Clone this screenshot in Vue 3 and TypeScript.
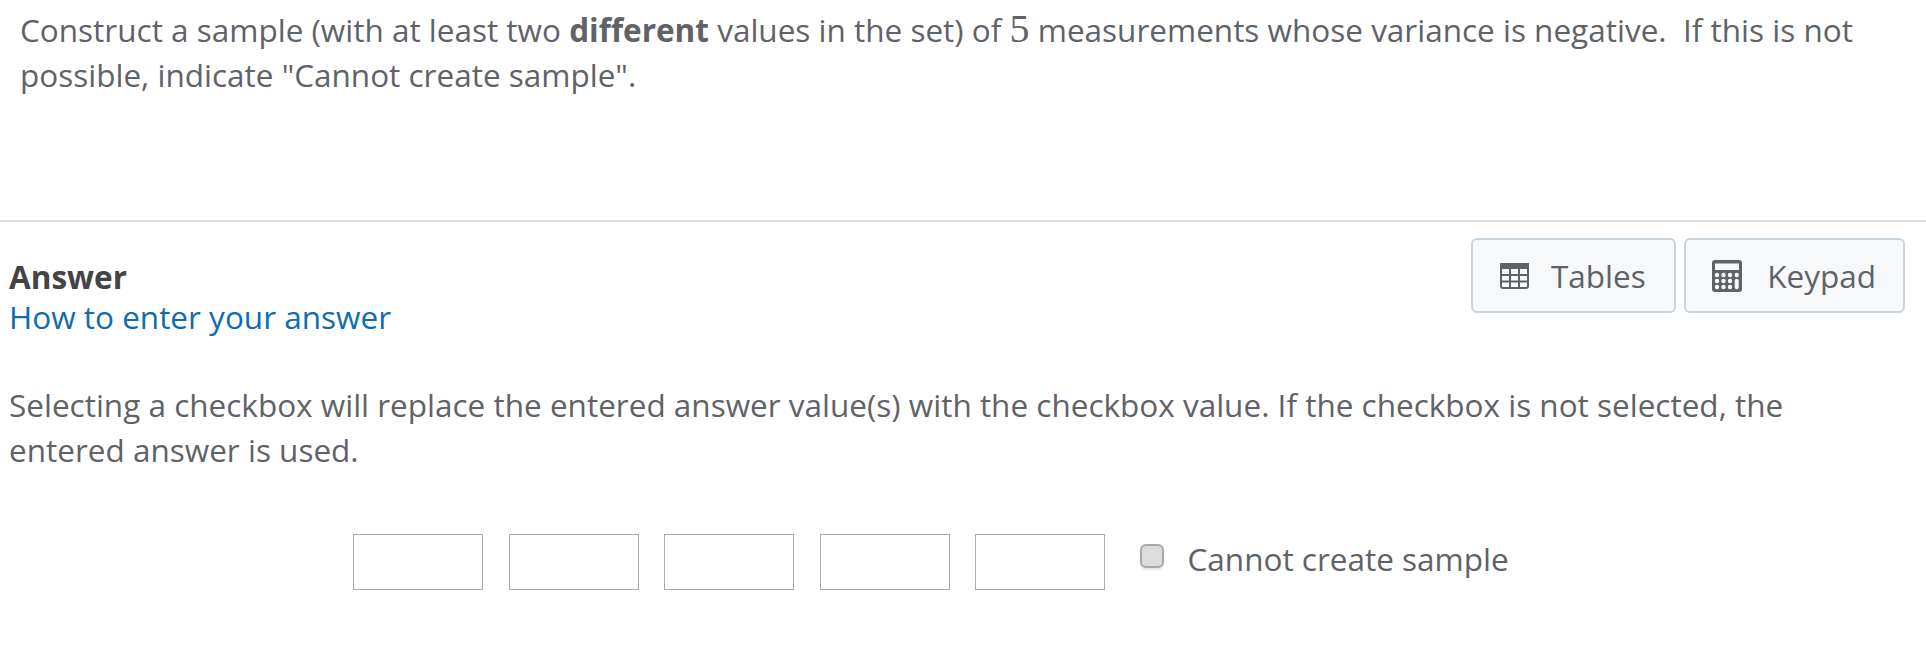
<script setup lang="ts">
const boxes: number[] = [1, 2, 3, 4, 5]
const dots: [number, number][] = [
  [5, 15], [11.5, 15], [18, 15], [24.7, 15],
  [5, 21], [11.5, 21], [18, 21],
  [5, 27], [11.5, 27], [18, 27],
]
</script>

<template>
  <main class="page">
    <p class="question">
      Construct a sample (with at least two <strong>different</strong> values in the set) of <span class="math">5</span> measurements whose variance is negative.&nbsp; If this is not possible, indicate "Cannot create sample".
    </p>
    <hr class="rule" />
    <section class="answer">
      <div class="head">
        <div>
          <div class="title">Answer</div>
          <a class="link">How to enter your answer</a>
        </div>
        <div class="tools">
          <button class="tool tool-tables">
            <svg viewBox="0 0 29 26" class="ic-table" fill="none" stroke="#5f6368" stroke-width="2">
              <rect x="1" y="1" width="27" height="24" rx="2" />
              <rect x="1" y="1" width="27" height="4" fill="#5f6368" />
              <path d="M1 12h27M1 18.5h27M10 5v20M19 5v20" />
            </svg>
            Tables
          </button>
          <button class="tool tool-keypad">
            <svg viewBox="0 0 30 32" class="ic-keypad">
              <rect width="30" height="32" rx="3" fill="#5f6368" />
              <rect x="3" y="3.5" width="24" height="6.5" fill="#f7f8fa" />
              <circle v-for="[x, y] in dots" :key="`${x}-${y}`" :cx="x" :cy="y" r="2.2" fill="#f7f8fa" />
              <rect x="22.7" y="18.8" width="4" height="10.4" rx="2" fill="#f7f8fa" />
            </svg>
            Keypad
          </button>
        </div>
      </div>
      <p class="note">Selecting a checkbox will replace the entered answer value(s) with the checkbox value. If the checkbox is not selected, the entered answer is used.</p>
      <div class="inputs">
        <input v-for="b in boxes" :key="b" class="box" type="text" />
        <label class="check"><span class="cb"></span><span>Cannot create sample</span></label>
      </div>
    </section>
  </main>
</template>

<style scoped>
.page { width: 1926px; height: 664px; background: #fff; font-family: "Open Sans", sans-serif; font-size: 31.5px; line-height: 45px; color: #5f6368; overflow: hidden; box-sizing: border-box; }
.question { margin: 0; padding: 7px 0 0 20px; width: 1860px; height: 220px; box-sizing: border-box; }
.question strong { font-weight: 700; }
.math { font-family: "Liberation Serif", serif; font-size: 40px; line-height: 30px; }
.rule { margin: 0; border: 0; border-top: 2px solid #e0e0e0; }
.answer { padding: 16px 21px 0 9px; }
.head { display: flex; justify-content: space-between; align-items: flex-start; }
.title { font-weight: 700; color: #444; margin-top: 19px; line-height: 40px; }
.link { color: #0f6cb0; line-height: 40px; display: block; }
.tools { display: flex; gap: 8px; }
.tool { height: 75px; display: flex; align-items: center; background: #f7f8fa; border: 2px solid #c8d5de; border-radius: 6px; font: inherit; color: #5f6368; }
.tool-tables { padding: 0 28.5px 0 27px; gap: 22px; }
.tool-keypad { padding: 0 27px 0 26px; gap: 25px; }
.ic-table { width: 29px; height: 26px; display: block; }
.ic-keypad { width: 30px; height: 32px; display: block; }
.note { margin: 45px 0 0; width: 1830px; }
.inputs { display: flex; align-items: center; margin: 62px 0 0 344px; gap: 25.5px; }
.box { width: 130px; height: 56px; box-sizing: border-box; border: 1px solid #aaa; background: #fff; border-radius: 0; padding: 0; }
.check { display: flex; align-items: center; margin: -8px 0 0 9px; gap: 24px; }
.cb { display: block; width: 24px; height: 24px; margin-bottom: 4px; box-sizing: border-box; background: #dcdcdc; border: 2px solid #a8a8a8; border-radius: 6px; box-shadow: 0 2px 2px #e4e4e4; }
</style>
